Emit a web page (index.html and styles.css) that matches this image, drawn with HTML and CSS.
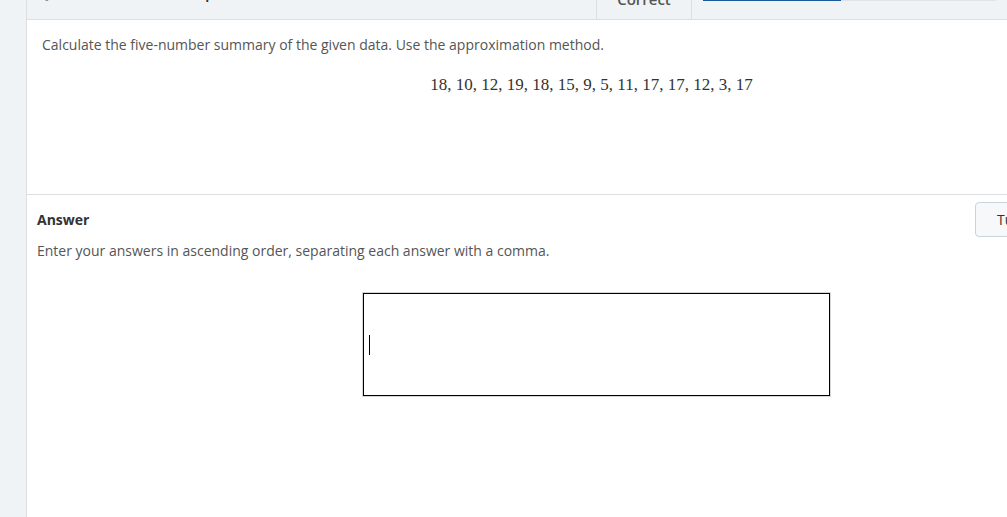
FILE: index.html
```html
<!DOCTYPE html>
<html lang="en">
<head>
<meta charset="utf-8">
<title>Five-number summary</title>
<link rel="stylesheet" href="styles.css">
</head>
<body>
<div class="page">
  <aside class="gutter"></aside>
  <main class="main">
    <header class="topbar">
      <div class="title">Question 12 of 15, Step 1 of 1</div>
      <div class="status"><span class="status-text">Correct</span></div>
      <div class="progress"><div class="progress-fill" style="width:47%"></div></div>
    </header>
    <section class="question">
      <p class="prompt">Calculate the five-number summary of the given data. Use the approximation method.</p>
      <p class="data">18, 10, 12, 19, 18, 15, 9, 5, 11, 17, 17, 12, 3, 17</p>
    </section>
    <section class="answer">
      <div class="answer-head">
        <h2 class="answer-title">Answer</h2>
        <button class="tool-btn" type="button">Tutorial</button>
      </div>
      <p class="instruction">Enter your answers in ascending order, separating each answer with a comma.</p>
      <div class="input-box"><span class="caret"></span></div>
    </section>
  </main>
</div>
</body>
</html>
```
FILE: styles.css
```css
html, body {
  margin: 0;
  padding: 0;
  overflow: hidden;
  background: #ffffff;
}

body {
  font-family: "Open Sans", "Liberation Sans", sans-serif;
  color: #555555;
}

.page {
  display: flex;
  width: 1156px;
  min-height: 100vh;
}

.gutter {
  flex: 0 0 26px;
  background: #eff3f6;
  border-right: 1px solid #dcdfe2;
}

.main {
  flex: 1;
  display: flex;
  flex-direction: column;
  min-width: 0;
}

.topbar {
  display: flex;
  height: 19px;
  background: #f0f3f6;
  border-bottom: 1px solid #dcdfe2;
  overflow: hidden;
}

.title {
  flex: 0 0 559px;
  padding-left: 10px;
  margin-top: -18px;
  font-size: 16px;
  font-weight: 600;
  line-height: 20px;
  color: #333333;
  white-space: nowrap;
}

.status {
  flex: 0 0 94px;
  border-left: 1px solid #dcdfe2;
  border-right: 1px solid #dcdfe2;
  text-align: center;
}

.status-text {
  display: block;
  margin-top: -11px;
  font-size: 15px;
  font-weight: 600;
  line-height: 20px;
  color: #555555;
}

.progress {
  flex: 0 0 293px;
  height: 8px;
  margin: -7px 0 0 11px;
  background: #e1e4e7;
  overflow: hidden;
}

.progress-fill {
  height: 100%;
  background: #1a5a96;
}

.question {
  height: 175px;
  box-sizing: border-box;
  padding: 15px 15px 0 15px;
  border-bottom: 1px solid #dcdfe2;
}

.prompt {
  margin: 0;
  font-size: 14px;
  line-height: 20px;
  color: #555555;
}

.data {
  margin: 20px 0 0 0;
  text-align: center;
  font-family: "Liberation Serif", "Times New Roman", serif;
  font-size: 17px;
  line-height: 20px;
  color: #333333;
}

.answer {
  padding: 0 10px;
}

.answer-head {
  display: flex;
  align-items: center;
  justify-content: space-between;
  margin-top: 7px;
  height: 35px;
}

.answer-title {
  margin: 0;
  font-size: 14px;
  font-weight: 700;
  line-height: 20px;
  color: #333333;
}

.tool-btn {
  width: 171px;
  height: 35px;
  box-sizing: border-box;
  padding: 0 0 0 21px;
  text-align: left;
  border: 1px solid #c9d4dc;
  border-radius: 4px;
  background: #f6f8f9;
  font-family: "Open Sans", "Liberation Sans", sans-serif;
  font-size: 14px;
  color: #333333;
}

.instruction {
  margin: 4px 0 0 0;
  font-size: 14px;
  line-height: 20px;
  color: #555555;
}

.input-box {
  display: flex;
  align-items: center;
  width: 467px;
  height: 103px;
  box-sizing: border-box;
  margin: 32px 0 0 326px;
  padding-left: 5px;
  border: 1px solid #000000;
  box-shadow: 0 0 0 1px #d6d6d6;
  background: #ffffff;
}

.caret {
  display: block;
  width: 1px;
  height: 20px;
  background: #000000;
}
```
